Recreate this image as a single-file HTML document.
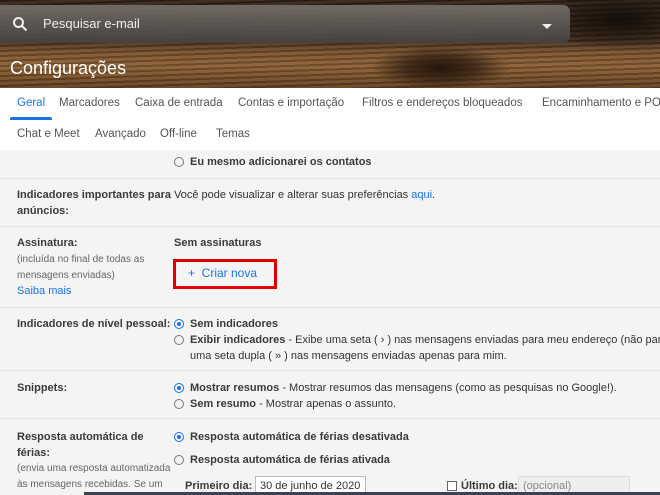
<!DOCTYPE html>
<html><head><meta charset="utf-8"><style>
*{margin:0;padding:0;box-sizing:border-box}
body{width:660px;height:495px;overflow:hidden;font-family:"Liberation Sans",sans-serif;background:#f4f4f4;position:relative;color:#333}
.hdr{position:absolute;left:0;top:0;width:660px;height:88px;
background:
radial-gradient(ellipse 70px 22px at 440px 68px,#24160c 0%,rgba(40,25,15,.7) 50%,rgba(0,0,0,0) 100%),
radial-gradient(ellipse 90px 30px at 620px 20px,#150d08,rgba(0,0,0,0)),
repeating-linear-gradient(178deg,rgba(0,0,0,.2) 0 2px,rgba(255,220,170,.07) 2px 5px),
linear-gradient(180deg,#2e2319 0%,#3d2b1b 45%,#7a5230 60%,#8a5e35 75%,#62401f 100%);}
.search{position:absolute;left:0;top:5px;width:570px;height:38px;border-radius:0 7px 7px 0;background:linear-gradient(180deg,rgba(120,115,108,.88),rgba(68,66,66,.92));}
.search span{position:absolute;left:43px;top:11px;color:#eee;font-size:13px}
.title{position:absolute;left:10px;top:58px;color:#fff;font-size:18px}
.tabs{position:absolute;left:0;top:88px;width:660px;height:62px;background:#fff}
.tab{position:absolute;font-size:11.5px;color:#555;white-space:nowrap}
.t{position:absolute;font-size:11px;white-space:nowrap;color:#333}
.b{font-weight:bold;color:#3a3a3a}
.s{font-size:10px;color:#666}
.ln{position:absolute;left:0;width:660px;height:1px;background:#e2e2e2}
.r{position:absolute;width:10px;height:10px;border:1px solid #777;border-radius:50%}
.r.on{border-color:#1a73e8}
.r.on::after{content:"";position:absolute;left:2px;top:2px;width:4px;height:4px;border-radius:50%;background:#1a73e8}
a{color:#1a73e8;text-decoration:none}
</style></head><body>
<div class="hdr">
<div class="search">
<svg style="position:absolute;left:12px;top:11px" width="16" height="16" viewBox="0 0 16 16"><circle cx="6.5" cy="6.5" r="4.5" stroke="#eee" stroke-width="2" fill="none"/><path d="M10 10l4.5 4.5" stroke="#eee" stroke-width="2"/></svg>
<span>Pesquisar e-mail</span>
<svg style="position:absolute;left:542px;top:19px" width="10" height="6"><path d="M0 0h10L5 5z" fill="#eee"/></svg>
</div>
<div class="title">Configurações</div>
</div>
<div class="tabs">
<div class="tab" style="left:17px;top:9px;color:#1a73e8">Geral</div>
<div style="position:absolute;left:10px;top:29px;width:42px;height:3px;background:#1a73e8;border-radius:2px 2px 0 0"></div>
<div class="tab" style="left:59px;top:9px">Marcadores</div>
<div class="tab" style="left:135px;top:9px">Caixa de entrada</div>
<div class="tab" style="left:238px;top:9px">Contas e importação</div>
<div class="tab" style="left:362px;top:9px">Filtros e endereços bloqueados</div>
<div class="tab" style="left:542px;top:9px">Encaminhamento e POP</div>
<div class="tab" style="left:17px;top:40px">Chat e Meet</div>
<div class="tab" style="left:95px;top:40px">Avançado</div>
<div class="tab" style="left:160px;top:40px">Off-line</div>
<div class="tab" style="left:216px;top:40px">Temas</div>
</div>

<div class="r" style="left:174px;top:157px"></div>
<div class="t b" style="left:190px;top:156px">Eu mesmo adicionarei os contatos</div>
<div class="ln" style="top:178px"></div>
<div class="t b" style="left:17px;top:189px">Indicadores importantes para</div>
<div class="t b" style="left:17px;top:205px">anúncios:</div>
<div class="t" style="left:174px;top:189px">Você pode visualizar e alterar suas preferências <a>aqui</a>.</div>
<div class="ln" style="top:226px"></div>
<div class="t b" style="left:17px;top:237px">Assinatura:</div>
<div class="t s" style="left:17px;top:254px">(incluída no final de todas as</div>
<div class="t s" style="left:17px;top:270px">mensagens enviadas)</div>
<div class="t" style="left:17px;top:285px"><a>Saiba mais</a></div>
<div class="t b" style="left:174px;top:237px">Sem assinaturas</div>
<div style="position:absolute;left:173px;top:259px;width:104px;height:30px;border:3px solid #e00000"></div>
<div class="t" style="left:188px;top:266px;color:#1a73e8;font-size:12px">+&nbsp;&nbsp;Criar nova</div>
<div class="ln" style="top:307px"></div>
<div class="t b" style="left:17px;top:318px">Indicadores de nível pessoal:</div>
<div class="r on" style="left:174px;top:319px"></div>
<div class="t b" style="left:190px;top:318px">Sem indicadores</div>
<div class="r" style="left:174px;top:335px"></div>
<div class="t" style="left:190px;top:334px"><span class="b">Exibir indicadores</span> - Exibe uma seta ( › ) nas mensagens enviadas para meu endereço (não para</div>
<div class="t" style="left:190px;top:350px">uma seta dupla ( » ) nas mensagens enviadas apenas para mim.</div>
<div class="ln" style="top:370px"></div>
<div class="t b" style="left:17px;top:382px">Snippets:</div>
<div class="r on" style="left:174px;top:383px"></div>
<div class="t" style="left:190px;top:382px"><span class="b">Mostrar resumos</span> - Mostrar resumos das mensagens (como as pesquisas no Google!).</div>
<div class="r" style="left:174px;top:399px"></div>
<div class="t" style="left:190px;top:398px"><span class="b">Sem resumo</span> - Mostrar apenas o assunto.</div>
<div class="ln" style="top:418px"></div>
<div class="t b" style="left:17px;top:431px">Resposta automática de</div>
<div class="t b" style="left:17px;top:447px">férias:</div>
<div class="t s" style="left:17px;top:463px">(envia uma resposta automatizada</div>
<div class="t s" style="left:17px;top:479px">às mensagens recebidas. Se um</div>
<div class="r on" style="left:174px;top:432px"></div>
<div class="t b" style="left:190px;top:431px">Resposta automática de férias desativada</div>
<div class="r" style="left:174px;top:455px"></div>
<div class="t b" style="left:190px;top:454px">Resposta automática de férias ativada</div>
<div class="t b" style="left:185px;top:480px">Primeiro dia:</div>
<div style="position:absolute;left:255px;top:476px;width:111px;height:19px;border:1px solid #bbb;background:#fff;font-size:11px;padding:3px 4px">30 de junho de 2020</div>
<div style="position:absolute;left:447px;top:481px;width:10px;height:10px;border:1px solid #666;background:#fff"></div>
<div class="t b" style="left:461px;top:480px">Último dia:</div>
<div style="position:absolute;left:518px;top:476px;width:112px;height:19px;border:1px solid #ddd;background:#eee;font-size:11px;padding:3px 4px;color:#888">(opcional)</div>
<div style="position:absolute;left:84px;top:492px;width:576px;height:3px;background:#3a4450"></div>
</body></html>
